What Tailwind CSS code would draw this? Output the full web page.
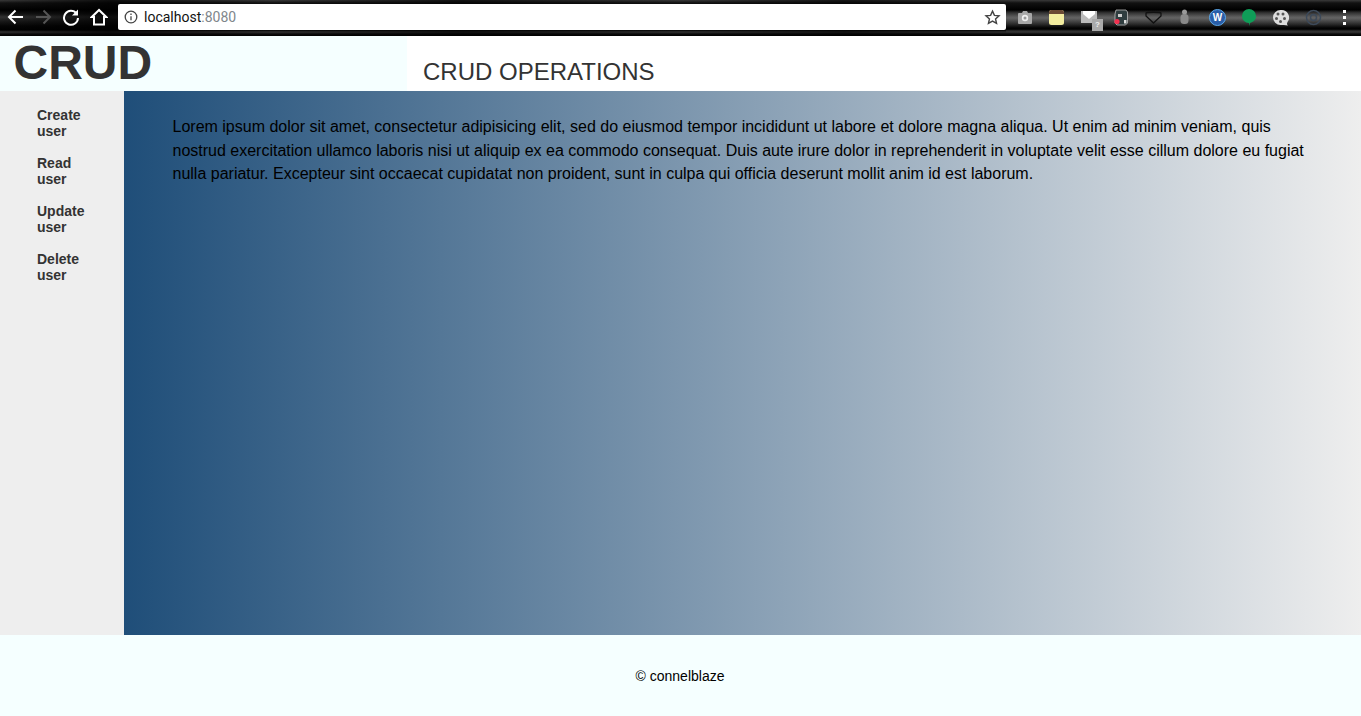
<!DOCTYPE html>
<html lang="en">
<head>
  <meta charset="UTF-8">
  <title>CRUD</title>
  <script src="https://cdn.jsdelivr.net/npm/@tailwindcss/browser@4"></script>
</head>
<body class="w-[1361px] h-[716px] overflow-hidden bg-[#f5ffff] font-['Liberation_Sans',Arial,sans-serif] text-black">

  <!-- Browser toolbar -->
  <div class="flex h-[36px] items-center pb-[2px] bg-[linear-gradient(90deg,#0000_0%,#000b_8%,#0000_20%,#000a_34%,#0000_50%,#0009_62%,#0000_75%),linear-gradient(180deg,#3a3a3a_0px,#111_3px,#000_10px,#161616_14px,#333_17px,#1a1a1a_21px,#050505_26px,#000_30px,#333_32px,#0c0c0c_34px,#000_36px)]">
    <div class="flex h-[34px] w-[118px] shrink-0 items-center">
      <svg class="ml-[7px] h-[18px] w-[18px]" viewBox="0 0 18 18" fill="none" stroke="#fff" stroke-width="2"><path d="M16 9H2.500M8.500 2.500 2 9l6.500 6.500"/></svg>
      <svg class="ml-[9px] h-[18px] w-[18px]" viewBox="0 0 18 18" fill="none" stroke="#555" stroke-width="2"><path d="M2 9h13.500M9.500 2.500 16 9l-6.500 6.500"/></svg>
      <svg class="ml-[10px] h-[18px] w-[18px]" viewBox="0 0 18 18" fill="none" stroke="#fff" stroke-width="2"><path d="M14.500 5.500A7 7 0 1 0 16 10"/><path d="M16 1.500v6h-6" fill="#fff" stroke="none"/></svg>
      <svg class="ml-[10px] h-[18px] w-[18px]" viewBox="0 0 18 18" fill="none" stroke="#fff" stroke-width="2"><path d="M9 2 1.800 9H4v7.500h10V9h2.200z"/></svg>
    </div>
    <div class="flex h-[26px] w-[888px] shrink-0 items-center rounded-[2px] bg-white pl-[6px] pr-[5px] font-['Roboto',sans-serif] text-[14px]">
      <svg class="h-[14px] w-[14px]" viewBox="0 0 14 14" fill="none" stroke="#444" stroke-width="1.300"><circle cx="7" cy="7" r="5.800"/><path d="M7 6.200v4M7 3.600v1.300"/></svg>
      <span class="ml-[6px] text-[#111]">localhost<span class="text-[#80868b]">:8080</span></span>
      <svg class="ml-auto h-[17px] w-[17px]" viewBox="0 0 24 24" fill="none" stroke="#444" stroke-width="2"><path d="m12 3 2.700 6 6.500.7-4.900 4.300 1.400 6.400L12 17.100 6.300 20.400 7.700 14 2.800 9.700 9.300 9z"/></svg>
    </div>
    <!-- Extension icons -->
    <div class="flex h-[34px] flex-1 items-center pl-[11px] bg-[linear-gradient(180deg,#0000_10px,#5558_13px,#777b_18px,#5558_23px,#0000_28px,#0000_29px,#4448_31px,#0000_33px)]">
      <svg class="h-[16px] w-[16px]" viewBox="0 0 16 16"><path d="M1 5a1 1 0 0 1 1-1h3l1-2h4l1 2h3a1 1 0 0 1 1 1v9a1 1 0 0 1-1 1H2a1 1 0 0 1-1-1z" fill="#a8a8a8"/><circle cx="8" cy="9" r="3.200" fill="#eee"/><circle cx="8" cy="9" r="1.500" fill="#999"/></svg>
      <svg class="ml-[15px] h-[16px] w-[16px]" viewBox="0 0 16 16"><rect x="1" y="1" width="15" height="15" rx="2.500" fill="#f3eda0"/><path d="M1 3.500A2.500 2.500 0 0 1 3.500 1h10A2.500 2.500 0 0 1 16 3.500V5H1z" fill="#6b4a35"/></svg>
      <div class="relative ml-[17px] h-[16px] w-[16px]">
        <svg class="h-[16px] w-[16px]" viewBox="0 0 16 16"><rect y="2" width="16" height="12" fill="#bbb"/><path d="M2 2h12v3l-6 5-6-5z" fill="#fff"/></svg>
        <span class="absolute left-[11px] top-[10px] flex h-[12px] w-[11px] items-center justify-center bg-[#aaa] text-[8px] font-bold text-[#eee]">?</span>
      </div>
      <svg class="ml-[15px] h-[17px] w-[17px]" viewBox="0 0 17 17"><path d="M4 1h10l1.500 2v11l-2 2H5l-2-2V5z" fill="#2f3d3f" stroke="#bbb" stroke-width=".8"/><path d="M6 5h4v3H6z" fill="#ccc"/><path d="M12 11h2.500v3.500H12z" fill="#ddd"/><circle cx="5" cy="12.500" r="2.600" fill="#f2304f"/></svg>
      <svg class="ml-[16px] h-[16px] w-[17px]" viewBox="0 0 17 16" fill="none" stroke="#111" stroke-width="1.300"><path d="M1 4c1-1 14-1 15 0v3l-7.500 7L1 7z"/></svg>
      <svg class="ml-[14px] h-[16px] w-[17px]" viewBox="0 0 17 16"><circle cx="8.500" cy="3" r="2.500" fill="#999"/><rect x="4.500" y="5" width="8" height="10" rx="3.500" fill="#8a8a8a"/></svg>
      <div class="ml-[16px] flex h-[17px] w-[17px] items-center justify-center rounded-full border border-[#5ca8e8] bg-[#2a5ea8] text-[10px] font-bold text-white">W</div>
      <svg class="ml-[15px] h-[19px] w-[16px]" viewBox="0 0 16 19"><path d="M8 1a7 7 0 0 1 7 7c0 4-3 6-6 7l-1 3v-3a7 7 0 0 1 0-14z" fill="#0f9d58"/></svg>
      <svg class="ml-[15px] h-[17px] w-[17px]" viewBox="0 0 17 17"><path d="M8.500 1a7.500 7.500 0 1 0 0 15c2 0 4.500-.5 7.500.5-1.500-1.500-1-2-.5-3.500A7.500 7.500 0 0 0 8.500 1z" fill="#ddd"/><circle cx="6" cy="5" r="1.500" fill="#555"/><circle cx="11" cy="5" r="1.500" fill="#555"/><circle cx="4.500" cy="9.500" r="1.500" fill="#555"/><circle cx="8.500" cy="12.500" r="1.500" fill="#555"/><circle cx="12.500" cy="9.500" r="1.500" fill="#555"/></svg>
      <svg class="ml-[16px] h-[17px] w-[17px]" viewBox="0 0 17 17" fill="none" stroke="#3d4a5a" stroke-width="1.500"><circle cx="8.500" cy="8.500" r="7"/><circle cx="8.500" cy="8.500" r="3"/></svg>
      <div class="ml-[21px] flex flex-col gap-[3px]">
        <span class="h-[3px] w-[3px] bg-white"></span>
        <span class="h-[3px] w-[3px] bg-white"></span>
        <span class="h-[3px] w-[3px] bg-white"></span>
      </div>
    </div>
  </div>

  <!-- Page header -->
  <header class="flex h-[55px] bg-white">
    <div class="w-[407px] bg-[#f5ffff] pl-[13.500px]">
      <h1 class="text-[48px] leading-[53px] font-bold text-[#333]">CRUD</h1>
    </div>
    <h2 class="pl-[16px] pt-[21px] text-[24px] leading-[29px] text-[#333]">CRUD OPERATIONS</h2>
  </header>

  <div class="flex h-[544px]">
    <!-- Sidebar -->
    <nav class="w-[124px] shrink-0 bg-[#eeeeee] pl-[37px] pt-[16px] text-[14px] leading-[16px] font-bold text-[#333]">
      <ul class="flex flex-col gap-[16px]">
        <li class="w-[60px]">Create user</li>
        <li class="w-[60px]">Read user</li>
        <li class="w-[60px]">Update user</li>
        <li class="w-[60px]">Delete user</li>
      </ul>
    </nav>
    <!-- Main -->
    <main class="flex-1 bg-[linear-gradient(to_right,#1f4e79,#eeeeee)] pl-[48.500px] pr-[48px] pt-[24px]">
      <p class="text-[16px] leading-[23.500px]">Lorem ipsum dolor sit amet, consectetur adipisicing elit, sed do eiusmod tempor incididunt ut labore et dolore magna aliqua. Ut enim ad minim veniam, quis nostrud exercitation ullamco laboris nisi ut aliquip ex ea commodo consequat. Duis aute irure dolor in reprehenderit in voluptate velit esse cillum dolore eu fugiat nulla pariatur. Excepteur sint occaecat cupidatat non proident, sunt in culpa qui officia deserunt mollit anim id est laborum.</p>
    </main>
  </div>

  <footer class="flex h-[81px] justify-center pt-[33px] pr-[1px] text-[14px] leading-[16px]">© connelblaze</footer>

</body>
</html>
